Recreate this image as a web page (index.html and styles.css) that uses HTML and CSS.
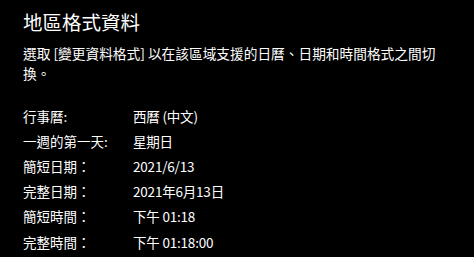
FILE: index.html
```html
<!DOCTYPE html>
<html lang="zh-Hant">
<head>
<meta charset="utf-8">
<link rel="stylesheet" href="styles.css">
</head>
<body>
<div class="page">
  <h1 class="title">地區格式資料</h1>
  <p class="desc">選取 [變更資料格式] 以在該區域支援的日曆、日期和時間格式之間切換。</p>
  <div class="grid">
    <div class="label">行事曆:</div><div class="value">西曆 (中文)</div>
    <div class="label">一週的第一天:</div><div class="value">星期日</div>
    <div class="label">簡短日期：</div><div class="value">2021/6/13</div>
    <div class="label">完整日期：</div><div class="value">2021年6月13日</div>
    <div class="label">簡短時間：</div><div class="value">下午 01:18</div>
    <div class="label">完整時間：</div><div class="value">下午 01:18:00</div>
  </div>
</div>
</body>
</html>
```
FILE: styles.css
```css
html, body {
  margin: 0;
  padding: 0;
  background: #000;
}
.page {
  padding: 8px 0 0 23px;
  color: #fff;
  font-family: "Noto Sans CJK TC", "Noto Sans", "Liberation Sans", sans-serif;
}
.title {
  margin: 0;
  font-size: 19.5px;
  line-height: 28px;
  font-weight: 400;
}
.desc {
  margin: 7px 0 0 0;
  width: 425px;
  font-size: 13.7px;
  line-height: 20px;
}
.grid {
  margin-top: 20px;
  display: grid;
  grid-template-columns: 110px auto;
  grid-auto-rows: 25.2px;
  align-items: center;
  font-size: 13.5px;
}
.value {
  letter-spacing: -0.2px;
}
```
